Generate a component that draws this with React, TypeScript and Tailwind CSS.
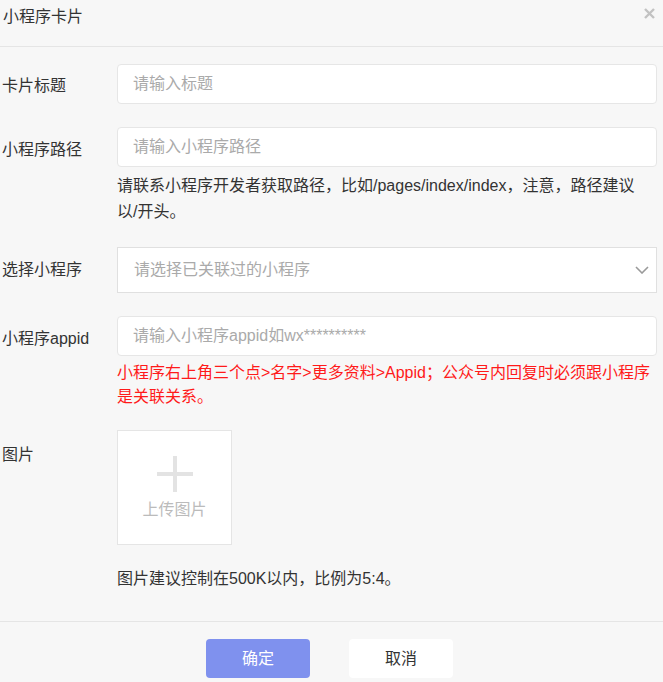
import React from 'react';

const fieldInput =
  'w-full h-[40px] rounded-[4px] border border-[#e6e6e6] bg-white px-[15px] text-[16px] text-[#333] outline-none placeholder:text-[#aaa]';

const Label: React.FC<{ children: React.ReactNode; className?: string }> = ({ children, className = '' }) => (
  <div className={`w-[115px] shrink-0 text-[16px] text-[#333] ${className}`}>{children}</div>
);

export default function App() {
  return (
    <div className="w-[663px] h-[682px] overflow-hidden bg-[#f7f7f7] font-['Liberation_Sans','Noto_Sans_CJK_SC',sans-serif] text-[#333]">
      {/* Header */}
      <div className="h-[47px] border-b border-[#e5e5e5] flex items-start justify-between pl-[3px] pr-[8px]">
        <span className="mt-[5px] text-[16px] leading-[24px] text-[#333]">小程序卡片</span>
        <svg className="mt-[8px]" width="11" height="11" viewBox="0 0 11 11">
          <path d="M1 1L10 10M10 1L1 10" stroke="#c2c2c2" strokeWidth="2.4" />
        </svg>
      </div>

      {/* Form */}
      <div className="pl-[2px] pr-[6px] pt-[17px]">
        <div className="flex items-center mb-[23px]">
          <Label className="pt-[4px]">卡片标题</Label>
          <input className={fieldInput} placeholder="请输入标题" />
        </div>

        <div className="mb-[22px]">
          <div className="flex items-center">
            <Label className="pt-[6px]">小程序路径</Label>
            <input className={fieldInput} placeholder="请输入小程序路径" />
          </div>
          <p className="ml-[115px] mt-[6px] text-[16px] leading-[26px] text-[#333]">
            请联系小程序开发者获取路径，比如/pages/index/index，注意，路径建议
            <br />
            以/开头。
          </p>
        </div>

        <div className="flex items-center mb-[23px]">
          <Label>选择小程序</Label>
          <div className="w-full h-[46px] border border-[#e0e0e0] bg-white pl-[16px] pr-[7px] flex items-center justify-between">
            <span className="text-[16px] text-[#aaa]">请选择已关联过的小程序</span>
            <svg width="14" height="8" viewBox="0 0 14 8">
              <path d="M1 1L7 7L13 1" fill="none" stroke="#9a9a9a" strokeWidth="1.6" />
            </svg>
          </div>
        </div>

        <div className="mb-[21px]">
          <div className="flex items-center">
            <Label className="pt-[6px]">小程序appid</Label>
            <input className={fieldInput} placeholder="请输入小程序appid如wx**********" />
          </div>
          <p className="ml-[115px] mt-[5px] text-[16px] leading-[24px] text-[#ff1a1a]">
            小程序右上角三个点&gt;名字&gt;更多资料&gt;Appid；公众号内回复时必须跟小程序是关联关系。
          </p>
        </div>

        <div className="mb-[29px]">
          <div className="flex items-start">
            <Label className="pt-[13px]">图片</Label>
            <div className="w-[115px] h-[115px] border border-[#e5e5e5] bg-white flex flex-col items-center">
              <div className="relative mt-[25px] w-[36px] h-[36px]">
                <div className="absolute left-0 top-[16px] w-[36px] h-[4px] bg-[#e3e3e3]" />
                <div className="absolute left-[16px] top-0 w-[4px] h-[36px] bg-[#e3e3e3]" />
              </div>
              <span className="mt-[8px] text-[16px] leading-[20px] text-[#bbb]">上传图片</span>
            </div>
          </div>
          <p className="ml-[115px] mt-[21px] text-[16px] leading-[26px] text-[#333]">
            图片建议控制在500K以内，比例为5:4。
          </p>
        </div>
      </div>

      {/* Footer */}
      <div className="border-t border-[#e5e5e5] pt-[17px] flex justify-center gap-[39px] pr-[4px]">
        <button className="w-[104px] h-[39px] rounded-[4px] bg-[#7f91ee] text-white text-[16px]">确定</button>
        <button className="w-[104px] h-[39px] rounded-[4px] bg-white text-[#333] text-[16px]">取消</button>
      </div>
    </div>
  );
}
